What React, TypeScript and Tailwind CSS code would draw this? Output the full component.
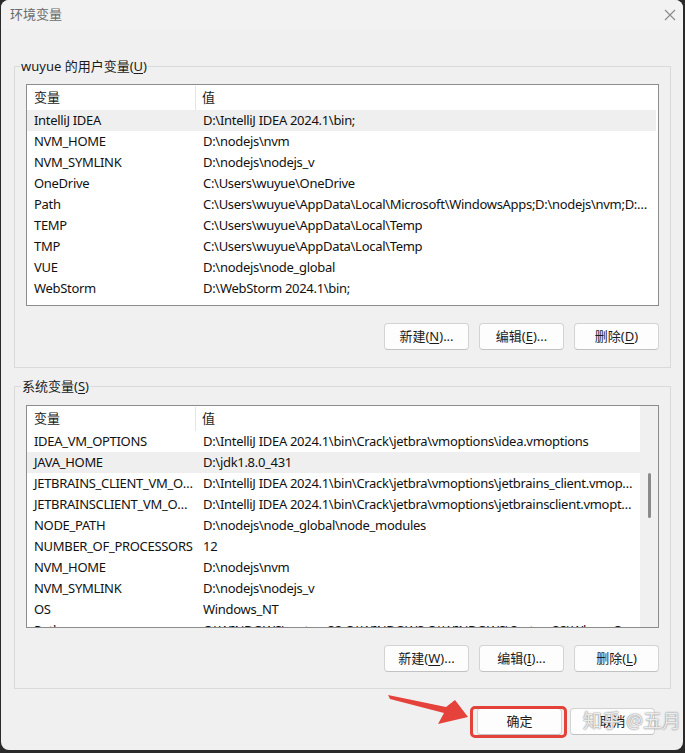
import React from 'react';

type Row = { name: string; value: string };

const userVars: Row[] = [
  { name: 'IntelliJ IDEA', value: 'D:\\IntelliJ IDEA 2024.1\\bin;' },
  { name: 'NVM_HOME', value: 'D:\\nodejs\\nvm' },
  { name: 'NVM_SYMLINK', value: 'D:\\nodejs\\nodejs_v' },
  { name: 'OneDrive', value: 'C:\\Users\\wuyue\\OneDrive' },
  {
    name: 'Path',
    value:
      'C:\\Users\\wuyue\\AppData\\Local\\Microsoft\\WindowsApps;D:\\nodejs\\nvm;D:\\nodejs\\nodejs_v;D:\\WebStorm',
  },
  { name: 'TEMP', value: 'C:\\Users\\wuyue\\AppData\\Local\\Temp' },
  { name: 'TMP', value: 'C:\\Users\\wuyue\\AppData\\Local\\Temp' },
  { name: 'VUE', value: 'D:\\nodejs\\node_global' },
  { name: 'WebStorm', value: 'D:\\WebStorm 2024.1\\bin;' },
];

const sysVars: Row[] = [
  { name: 'IDEA_VM_OPTIONS', value: 'D:\\IntelliJ IDEA 2024.1\\bin\\Crack\\jetbra\\vmoptions\\idea.vmoptions' },
  { name: 'JAVA_HOME', value: 'D:\\jdk1.8.0_431' },
  {
    name: 'JETBRAINS_CLIENT_VM_OPTIONS',
    value: 'D:\\IntelliJ IDEA 2024.1\\bin\\Crack\\jetbra\\vmoptions\\jetbrains_client.vmoptions',
  },
  {
    name: 'JETBRAINSCLIENT_VM_OPTIONS',
    value: 'D:\\IntelliJ IDEA 2024.1\\bin\\Crack\\jetbra\\vmoptions\\jetbrainsclient.vmoptions',
  },
  { name: 'NODE_PATH', value: 'D:\\nodejs\\node_global\\node_modules' },
  { name: 'NUMBER_OF_PROCESSORS', value: '12' },
  { name: 'NVM_HOME', value: 'D:\\nodejs\\nvm' },
  { name: 'NVM_SYMLINK', value: 'D:\\nodejs\\nodejs_v' },
  { name: 'OS', value: 'Windows_NT' },
  {
    name: 'Path',
    value: 'C:\\WINDOWS\\system32;C:\\WINDOWS;C:\\WINDOWS\\System32\\Wbem;C:\\WINDOWS\\System32\\WindowsPowerShell\\v1.0\\;',
  },
];

const font = { fontFamily: '"Noto Sans", "Noto Sans CJK SC", sans-serif' };

const Btn = ({ label, hot, tail }: { label: string; hot?: string; tail?: string }) => (
  <button className="w-[85px] h-[27px] shrink-0 rounded-[4px] border border-[#d3d3d3] border-b-[#c2c2c2] bg-[#fdfdfd] text-[13px] text-[#1b1b1b] flex items-center justify-center">
    {label}
    {hot && (
      <>
        (<span className="underline underline-offset-2">{hot}</span>)
      </>
    )}
    {tail}
  </button>
);

const VarList = ({
  rows,
  selected,
  height,
  scroll,
}: {
  rows: Row[];
  selected: number;
  height: string;
  scroll?: boolean;
}) => (
  <div className={`${height} w-full border border-[#8c8c8c] bg-white overflow-hidden flex`}>
    <div className="flex-1 min-w-0 flex flex-col">
      <div className="h-[25px] shrink-0 flex items-center text-[13px] text-[#1b1b1b]">
        <div className="w-[169px] shrink-0 pl-[7px] border-r border-[#e5e5e5] h-[24px] flex items-center">变量</div>
        <div className="pl-[6px]">值</div>
      </div>
      {rows.map((r, i) => (
        <div
          key={r.name + i}
          className={`h-[21px] shrink-0 flex items-center text-[13px] tracking-[-0.3px] text-[#111] ${
            i === selected ? 'bg-[#efefef]' : ''
          } ${scroll ? '' : 'mr-[2px]'}`}
        >
          <div className="w-[169px] shrink-0 pl-[7px] pr-[1px] truncate">{r.name}</div>
          <div className="flex-1 min-w-0 pl-[7px] pr-[6px] truncate">{r.value}</div>
        </div>
      ))}
    </div>
    {scroll && (
      <div className="w-[18px] shrink-0 bg-[#f0f0f0] flex justify-center">
        <div className="w-[3px] h-[45px] mt-[67px] rounded-full bg-[#8a8a8a]" />
      </div>
    )}
  </div>
);

export default function App() {
  return (
    <div className="relative w-[685px] h-[753px] bg-[#2a2a2a] pl-[1px] pr-[2px] pb-[3px] overflow-hidden" style={font}>
      <div className="h-full rounded-[8px] bg-[#f0f0f0] flex flex-col overflow-hidden">
        {/* title bar */}
        <div className="h-[30px] shrink-0 bg-[#f2f2f2] flex items-center justify-between pl-[9px] pr-[5px]">
          <span className="text-[13px] text-[#6b6b6b]">环境变量</span>
          <svg width="14" height="14" viewBox="0 0 14 14" className="mr-[1px]">
            <path d="M2 2 L12 12 M12 2 L2 12" stroke="#8a8a8a" strokeWidth="1.1" />
          </svg>
        </div>

        <div className="pl-[13px] pr-[12px] flex flex-col">
          <fieldset className="min-w-0 mt-[27px] border border-[#dadada] px-[11px] pb-[17px]">
            <legend className="-ml-[6px] px-[1px] h-[18px] leading-[18px] text-[13px] text-[#1b1b1b]">
              wuyue 的用户变量(<span className="underline underline-offset-2">U</span>)
            </legend>
            <div className="mt-[9px]">
              <VarList rows={userVars} selected={0} height="h-[222px]" />
            </div>
            <div className="mt-[17px] flex justify-end gap-[10px]">
              <Btn label="新建" hot="N" tail="..." />
              <Btn label="编辑" hot="E" tail="..." />
              <Btn label="删除" hot="D" />
            </div>
          </fieldset>

          <fieldset className="min-w-0 mt-[9px] border border-[#dadada] px-[11px] pb-[16px]">
            <legend className="-ml-[5px] px-[1px] h-[18px] leading-[18px] text-[13px] text-[#1b1b1b]">
              系统变量(<span className="underline underline-offset-2">S</span>)
            </legend>
            <div className="mt-[10px]">
              <VarList rows={sysVars} selected={1} height="h-[223px]" scroll />
            </div>
            <div className="mt-[17px] flex justify-end gap-[10px]">
              <Btn label="新建" hot="W" tail="..." />
              <Btn label="编辑" hot="I" tail="..." />
              <Btn label="删除" hot="L" />
            </div>
          </fieldset>

          <div className="mt-[19px] pr-[16px] flex justify-end gap-[8px]">
            <Btn label="确定" />
            <Btn label="取消" />
          </div>
        </div>
      </div>

      {/* annotation: red box around OK */}
      <div className="absolute left-[470px] top-[706px] w-[97px] h-[32px] border-[3px] border-[#e4413b] rounded-[5px]" />

      {/* annotation: red arrow */}
      <svg className="absolute left-0 top-0 pointer-events-none" width="685" height="753">
        <polygon points="388,695 390,699 444,713 438,724 468,717 455,700 446,707" fill="#e5423c" />
      </svg>

      {/* watermark */}
      <div className="absolute left-[583px] top-[709px] text-[19px] leading-[24px] text-white/85 pointer-events-none [text-shadow:0_0_1px_#777,0_0_2px_#999]">
        知乎 @五月
      </div>
    </div>
  );
}
